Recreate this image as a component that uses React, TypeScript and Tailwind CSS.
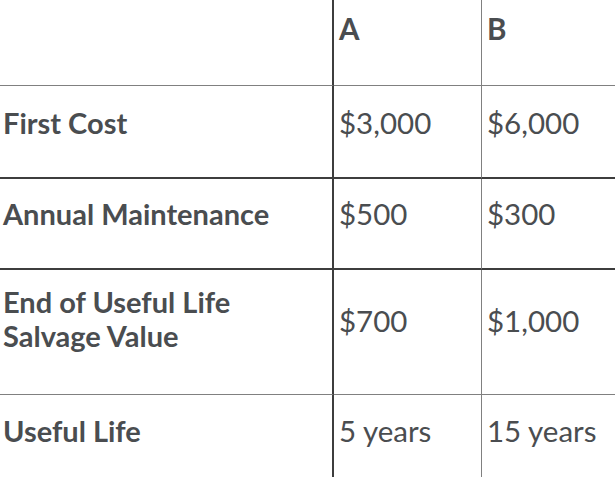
import { FC } from 'react'
import clsx from 'clsx'

interface Row {
    label: string[]
    a: string
    b: string
    h: string
    line: string
    labelPad: string
    valuePad: string
}

const rows: Row[] = [
    {
        label: ['First Cost'],
        a: '$3,000',
        b: '$6,000',
        h: 'h-[93px]',
        line: 'border-b-2 border-b-[#3d3d3d]',
        labelPad: 'pt-[21px]',
        valuePad: 'pt-[21px]',
    },
    {
        label: ['Annual Maintenance'],
        a: '$500',
        b: '$300',
        h: 'h-[91px]',
        line: 'border-b-2 border-b-[#3d3d3d]',
        labelPad: 'pt-[19px]',
        valuePad: 'pt-[19px]',
    },
    {
        label: ['End of Useful Life', 'Salvage Value'],
        a: '$700',
        b: '$1,000',
        h: 'h-[125px]',
        line: 'border-b border-b-[#808080]',
        labelPad: 'pt-[15px] leading-[34px]',
        valuePad: 'pt-[35px]',
    },
    {
        label: ['Useful Life'],
        a: '5 years',
        b: '15 years',
        h: 'h-[100px]',
        line: '',
        labelPad: 'pt-[20px]',
        valuePad: 'pt-[20px]',
    },
]

const first = 'border-r-2 border-r-[#3d3d3d] pl-[3px] text-[29px] font-bold'
const second = 'border-r border-r-[#808080] pl-[5px]'
const third = 'pl-[5px]'

const App: FC = () => {
    return (
        <div className="h-[477px] w-[615px] overflow-hidden bg-white font-['Lato','Liberation_Sans',sans-serif] text-[29.5px] leading-[32px] text-[#4a4d50]">
            <div className="grid grid-cols-[334px_148px_1fr]">
                <div className={clsx(first, 'h-[86px] border-b border-b-[#808080]')} />
                <div className={clsx(second, 'h-[86px] border-b border-b-[#808080] pt-[13px] font-bold')}>A</div>
                <div className={clsx(third, 'h-[86px] border-b border-b-[#808080] pt-[13px] font-bold')}>B</div>
                {rows.map((row) => (
                    <div key={row.label.join(' ')} className="contents">
                        <div className={clsx(first, row.h, row.line, row.labelPad)}>
                            {row.label.map((l) => (
                                <div key={l}>{l}</div>
                            ))}
                        </div>
                        <div className={clsx(second, row.h, row.line, row.valuePad)}>{row.a}</div>
                        <div className={clsx(third, row.h, row.line, row.valuePad)}>{row.b}</div>
                    </div>
                ))}
            </div>
        </div>
    )
}

export default App
